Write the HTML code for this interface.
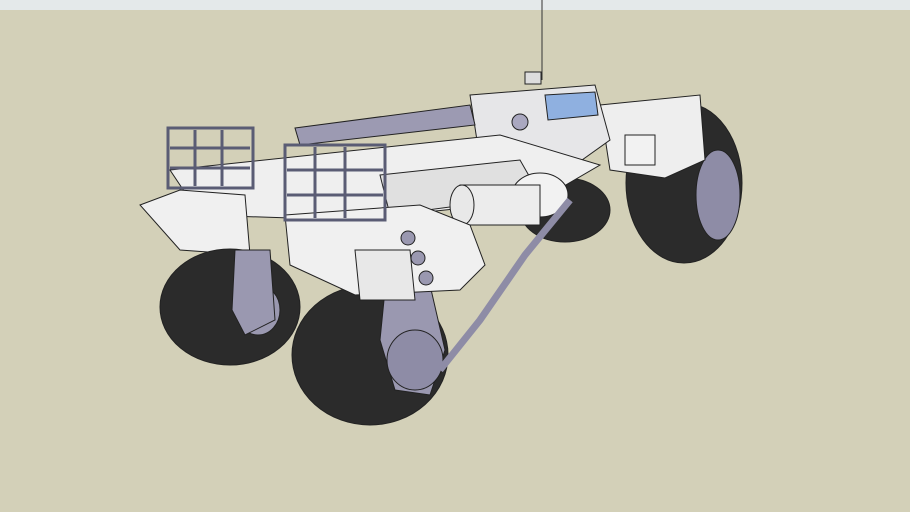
<!DOCTYPE html>
<html><head><style>
html,body{margin:0;padding:0;width:910px;height:512px;overflow:hidden;background:#d3d0b8}
</style></head><body>
<svg width="910" height="512" viewBox="0 0 910 512" xmlns="http://www.w3.org/2000/svg" stroke="#222" stroke-width="1">
<rect x="0" y="0" width="910" height="10" fill="#e4e9ea" stroke="none"/>
<line x1="542" y1="0" x2="542" y2="80" stroke="#333"/>
<ellipse cx="684" cy="183" rx="58" ry="80" fill="#2b2b2b"/>
<ellipse cx="718" cy="195" rx="22" ry="45" fill="#8e8ca6"/>
<ellipse cx="565" cy="210" rx="45" ry="32" fill="#2b2b2b"/>
<polygon points="600,105 700,95 705,160 665,178 610,170" fill="#eeeeee"/>
<rect x="625" y="135" width="30" height="30" fill="#f2f2f2"/>
<polygon points="470,95 595,85 610,140 575,165 480,160" fill="#e6e6e8"/>
<polygon points="545,95 595,92 598,115 548,120" fill="#8fb0e0"/>
<circle cx="520" cy="122" r="8" fill="#aaa8c0"/>
<rect x="525" y="72" width="16" height="12" fill="#ddd"/>
<polygon points="295,128 470,105 475,125 300,145" fill="#9c9ab2"/>
<polygon points="170,170 500,135 600,165 540,200 350,220 200,215" fill="#efefef"/>
<polygon points="380,175 520,160 540,195 390,215" fill="#e0e0e0"/>
<ellipse cx="540" cy="195" rx="28" ry="22" fill="#f2f2f2"/>
<rect x="460" y="185" width="80" height="40" fill="#ececec"/>
<ellipse cx="462" cy="205" rx="12" ry="20" fill="#e8e8e8"/>
<polygon points="140,205 180,190 245,195 250,255 180,250" fill="#f0f0f0"/>
<ellipse cx="230" cy="307" rx="70" ry="58" fill="#2b2b2b"/>
<ellipse cx="258" cy="310" rx="22" ry="25" fill="#9a98b0"/>
<polygon points="235,250 270,250 275,320 245,335 232,310" fill="#9a98b0"/>
<ellipse cx="370" cy="355" rx="78" ry="70" fill="#2b2b2b"/>
<polygon points="385,290 430,285 445,350 430,395 395,390 380,340" fill="#9a98b0"/>
<ellipse cx="415" cy="360" rx="28" ry="30" fill="#8e8ca6"/>
<polygon points="285,215 420,205 470,225 485,265 460,290 355,295 290,265" fill="#f0f0f0"/>
<polygon points="355,250 410,250 415,300 360,300" fill="#e8e8e8"/>
<circle cx="408" cy="238" r="7" fill="#9a98b0"/>
<circle cx="418" cy="258" r="7" fill="#9a98b0"/>
<circle cx="426" cy="278" r="7" fill="#9a98b0"/>
<g fill="none" stroke="#5a5c74" stroke-width="3">
<rect x="168" y="128" width="85" height="60"/>
<line x1="195" y1="130" x2="195" y2="186"/><line x1="222" y1="130" x2="222" y2="186"/>
<line x1="170" y1="148" x2="250" y2="148"/><line x1="170" y1="168" x2="250" y2="168"/>
<rect x="285" y="145" width="100" height="75"/>
<line x1="315" y1="147" x2="315" y2="218"/><line x1="345" y1="147" x2="345" y2="218"/>
<line x1="287" y1="170" x2="383" y2="170"/><line x1="287" y1="195" x2="383" y2="195"/>
</g>
<polyline points="440,370 480,320 525,255 570,200" fill="none" stroke="#8e8ca6" stroke-width="7"/>
</svg>
</body></html>
